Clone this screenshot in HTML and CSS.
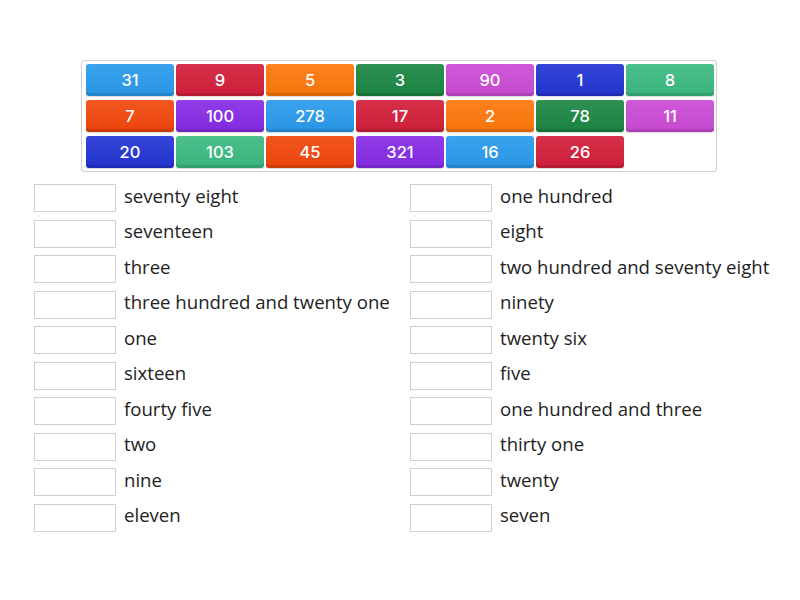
FILE: index.html
```html
<!DOCTYPE html>
<html>
<head>
<meta charset="utf-8">
<link rel="stylesheet" href="styles.css">
</head>
<body>
<div class="bank">
  <div class="tile c-blue">31</div>
  <div class="tile c-red">9</div>
  <div class="tile c-orange">5</div>
  <div class="tile c-dgreen">3</div>
  <div class="tile c-orchid">90</div>
  <div class="tile c-dblue">1</div>
  <div class="tile c-green">8</div>
  <div class="tile c-ored">7</div>
  <div class="tile c-purple">100</div>
  <div class="tile c-blue">278</div>
  <div class="tile c-red">17</div>
  <div class="tile c-orange">2</div>
  <div class="tile c-dgreen">78</div>
  <div class="tile c-orchid">11</div>
  <div class="tile c-dblue">20</div>
  <div class="tile c-green">103</div>
  <div class="tile c-ored">45</div>
  <div class="tile c-purple">321</div>
  <div class="tile c-blue">16</div>
  <div class="tile c-red">26</div>
</div>
<div class="answers">
  <div class="col">
    <div class="row"><div class="slot"></div><span class="label">seventy eight</span></div>
    <div class="row"><div class="slot"></div><span class="label">seventeen</span></div>
    <div class="row"><div class="slot"></div><span class="label">three</span></div>
    <div class="row"><div class="slot"></div><span class="label">three hundred and twenty one</span></div>
    <div class="row"><div class="slot"></div><span class="label">one</span></div>
    <div class="row"><div class="slot"></div><span class="label">sixteen</span></div>
    <div class="row"><div class="slot"></div><span class="label">fourty five</span></div>
    <div class="row"><div class="slot"></div><span class="label">two</span></div>
    <div class="row"><div class="slot"></div><span class="label">nine</span></div>
    <div class="row"><div class="slot"></div><span class="label">eleven</span></div>
  </div>
  <div class="col">
    <div class="row"><div class="slot"></div><span class="label">one hundred</span></div>
    <div class="row"><div class="slot"></div><span class="label">eight</span></div>
    <div class="row"><div class="slot"></div><span class="label">two hundred and seventy eight</span></div>
    <div class="row"><div class="slot"></div><span class="label">ninety</span></div>
    <div class="row"><div class="slot"></div><span class="label">twenty six</span></div>
    <div class="row"><div class="slot"></div><span class="label">five</span></div>
    <div class="row"><div class="slot"></div><span class="label">one hundred and three</span></div>
    <div class="row"><div class="slot"></div><span class="label">thirty one</span></div>
    <div class="row"><div class="slot"></div><span class="label">twenty</span></div>
    <div class="row"><div class="slot"></div><span class="label">seven</span></div>
  </div>
</div>
</body>
</html>
```
FILE: styles.css
```css
html, body {
  margin: 0;
  padding: 0;
  background: #fff;
  font-family: "Open Sans", "Noto Sans", sans-serif;
}
.bank {
  box-sizing: border-box;
  width: 636px;
  height: 112px;
  margin: 60px 0 0 81px;
  padding: 3px 2px 3px 4px;
  border: 1px solid #cfcfcf;
  border-radius: 3px;
  display: flex;
  flex-wrap: wrap;
  align-content: flex-start;
  column-gap: 2px;
  row-gap: 4px;
}
.tile {
  box-sizing: border-box;
  width: 88px;
  height: 32px;
  border-radius: 3px;
  color: #fff;
  font-family: "Inter", "Lato", sans-serif;
  font-weight: 500;
  font-size: 16.5px;
  display: flex;
  align-items: center;
  justify-content: center;
  box-shadow: inset 0 -3px 0 rgba(0,0,0,0.12), 0 1px 1px rgba(0,0,0,0.15);
  background-image: linear-gradient(rgba(255,255,255,0.08), rgba(0,0,0,0.04));
}
.c-blue { background-color: #2a9bec; }
.c-red { background-color: #d41f3b; }
.c-orange { background-color: #ff780c; }
.c-dgreen { background-color: #1c8744; }
.c-orchid { background-color: #cc4bd6; }
.c-dblue { background-color: #2335d4; }
.c-green { background-color: #3cba82; }
.c-ored { background-color: #f2470c; }
.c-purple { background-color: #862ce6; }
.answers {
  margin: 12px 0 0 34px;
  display: flex;
}
.col {
  width: 376px;
  display: flex;
  flex-direction: column;
  row-gap: 7.5px;
}
.row {
  display: flex;
  align-items: center;
  height: 28px;
  column-gap: 8px;
}
.slot {
  box-sizing: border-box;
  width: 82px;
  height: 28px;
  border: 1px solid #cfcfcf;
  background: #fff;
}
.label {
  font-size: 18.6px;
  color: #222;
  line-height: 1;
  margin-top: -4px;
}
```
